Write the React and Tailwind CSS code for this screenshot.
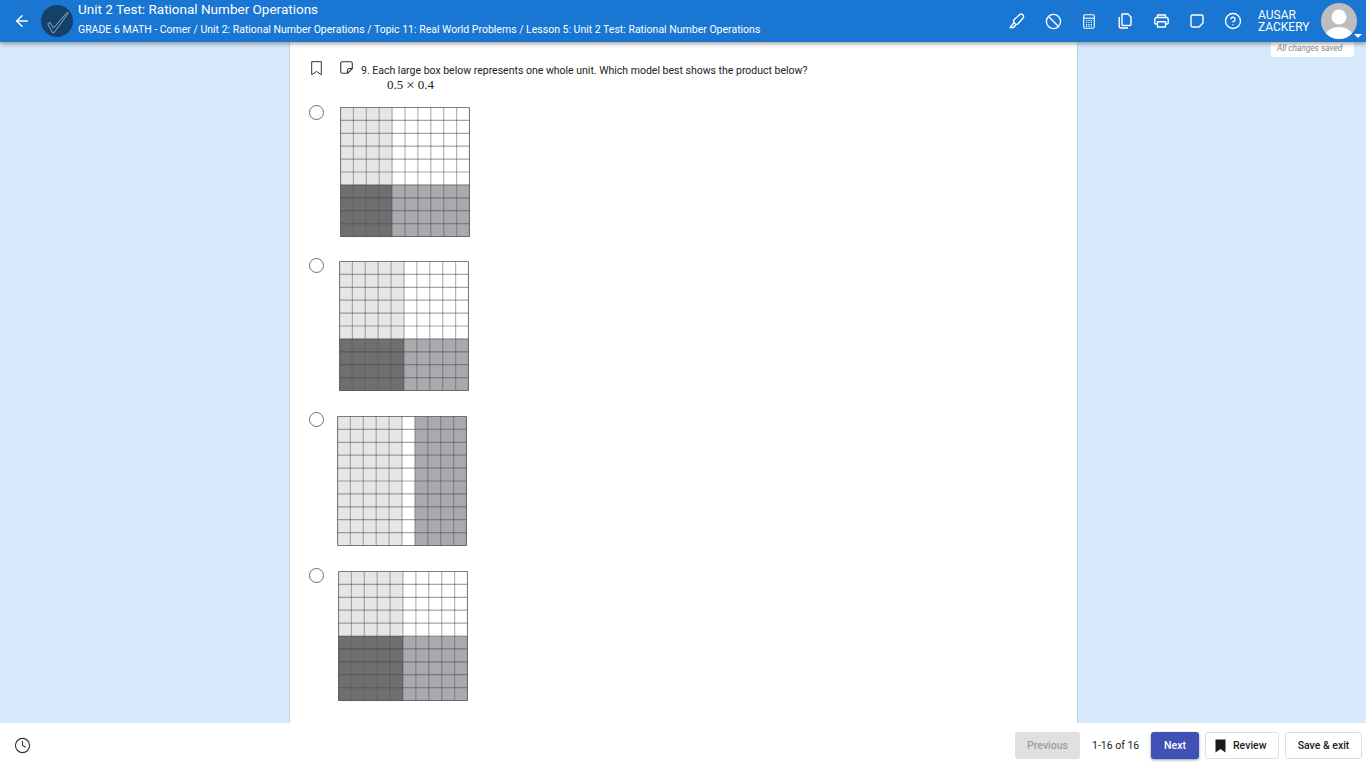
import React from "react";
import { ArrowLeft, Ban, CircleHelp, Clock } from "lucide-react";

const font = { fontFamily: "Roboto, sans-serif" };

function Model({ fill }) {
  const u = 12.9;
  const cells = [];
  for (let r = 0; r < 10; r++) {
    for (let c = 0; c < 10; c++) {
      const f = fill(r, c);
      if (f) cells.push(<rect key={r + "-" + c} x={c * u} y={r * u} width={u + 0.2} height={u + 0.2} fill={f} />);
    }
  }
  const lines = [];
  for (let i = 0; i <= 10; i++) {
    const edge = i === 0 || i === 10;
    lines.push(<line key={"v" + i} x1={i * u} x2={i * u} y1={0} y2={129} stroke="#3a3a3a" strokeOpacity={edge ? 0.65 : 0.38} strokeWidth="1.2" />);
    lines.push(<line key={"h" + i} y1={i * u} y2={i * u} x1={0} x2={129} stroke="#3a3a3a" strokeOpacity={edge ? 0.65 : 0.45} strokeWidth="1.2" />);
  }
  return (
    <svg width="130" height="130" viewBox="-0.5 -0.5 130 130" className="block">
      <rect x="0" y="0" width="129" height="129" fill="#fff" />
      {cells}
      {lines}
    </svg>
  );
}

const L = "#e6e6e6", D = "#6e6f71", M = "#a9aaad";

function Option({ fill, ml, mb, radioTop }) {
  return (
    <div className={"flex items-start " + mb}>
      <div className={"ml-[19.5px] h-[15px] w-[15px] shrink-0 rounded-full border border-[#6f6f6f] bg-white " + radioTop} />
      <div className={ml}><Model fill={fill} /></div>
    </div>
  );
}

export default function App() {
  return (
    <div className="relative flex h-screen w-full flex-col overflow-hidden bg-white" style={font}>
      <header className="relative z-10 flex h-[42px] shrink-0 items-center bg-[#1976d2] text-white shadow-[0_2px_4px_rgba(0,0,0,0.35)]">
        <ArrowLeft className="ml-[13px] h-[18px] w-[18px]" strokeWidth={2} />
        <svg width="32" height="32" viewBox="0 0 32 32" className="ml-[10px] shrink-0">
          <circle cx="16" cy="16" r="16" fill="#14406a" />
          <path d="M6.700 18.700 9 17.500l3.500 5.500L26 7.500l1.300.5L13 27.700h-1.500z" fill="none" stroke="#9db9d0" strokeWidth="0.9" strokeLinejoin="round" />
        </svg>
        <div className="ml-[5px] flex flex-col">
          <div className="mt-[-6px] text-[13.5px] leading-[19px]">Unit 2 Test: Rational Number Operations</div>
          <div className="mt-[4px] text-[10.5px] leading-[14px]">GRADE 6 MATH - Comer / Unit 2: Rational Number Operations / Topic 11: Real World Problems / Lesson 5: Unit 2 Test: Rational Number Operations</div>
        </div>
        <div className="ml-auto flex items-center">
          <div className="flex w-[36px] justify-center">
            <svg width="16" height="16" viewBox="0 0 16 16" fill="none" stroke="#fff" strokeWidth="1.4" strokeLinejoin="round" strokeLinecap="round">
              <path d="M4.800 7 10.800 1.500c1-.7 2.400-.4 3.200.6.700.9.700 2 0 2.900L8.800 11c-.8.700-2 .5-3-.4-1-1-1.500-2.600-1-3.600z" />
              <path d="M5 9.800 1 14.500h3.600l2.200-2.800" />
            </svg>
          </div>
          <div className="flex w-[36px] justify-center"><Ban className="h-[17px] w-[17px]" strokeWidth={1.9} /></div>
          <div className="flex w-[36px] justify-center">
            <svg width="12" height="15" viewBox="0 0 12 15" fill="none" stroke="#fff" strokeWidth="1.1">
              <rect x="0.700" y="0.700" width="10.600" height="13.600" rx="1.500" />
              <path d="M1 4.200h10" />
              <path d="M3 6.500h6M3 8.500h6M3 10.500h6M3 12.200h6" strokeDasharray="1.200 1.200" strokeWidth="1.200" />
            </svg>
          </div>
          <div className="flex w-[36px] justify-center">
            <svg width="14" height="16" viewBox="0 0 14 16" fill="none" stroke="#fff" strokeWidth="1.4" strokeLinejoin="round">
              <path d="M4 1h6l3 3v7.500a1 1 0 0 1-1 1H5a1 1 0 0 1-1-1z" />
              <path d="M1.200 4v9.500A1.500 1.500 0 0 0 2.700 15H10" />
            </svg>
          </div>
          <div className="flex w-[36px] justify-center">
            <svg width="15" height="14" viewBox="0 0 15 14" fill="none" stroke="#fff" strokeWidth="1.400" strokeLinejoin="round">
              <path d="M3.500 3.500V1h8v2.500" />
              <path d="M3.500 10H1.800A1 1 0 0 1 .8 9V5.500a2 2 0 0 1 2-2h9.400a2 2 0 0 1 2 2V9a1 1 0 0 1-1 1h-1.700" />
              <path d="M3.500 7.800h8V13h-8z" />
            </svg>
          </div>
          <div className="flex w-[36px] justify-center">
            <svg width="14" height="14" viewBox="0 0 14 14" fill="none" stroke="#fff" strokeWidth="1.400" strokeLinejoin="round">
              <path d="M2.500 1h9A1.500 1.500 0 0 1 13 2.500V9l-4 4H2.500A1.500 1.500 0 0 1 1 11.500v-9A1.500 1.500 0 0 1 2.500 1z" />
            </svg>
          </div>
          <div className="flex w-[36px] justify-center"><CircleHelp className="h-[18px] w-[18px]" strokeWidth={1.8} /></div>
        </div>
        <div className="ml-[7px] w-[63px] text-[12px] leading-[12px]">AUSAR<br />ZACKERY</div>
        <div className="relative mr-[9px] h-[36px] w-[36px] shrink-0">
          <svg width="36" height="36" viewBox="0 0 36 36" className="block">
            <defs><clipPath id="av"><circle cx="18" cy="18" r="18" /></clipPath></defs>
            <g clipPath="url(#av)">
              <rect width="36" height="36" fill="#bdbdbd" />
              <circle cx="18" cy="14" r="7.500" fill="#fff" />
              <ellipse cx="18" cy="34" rx="14" ry="10" fill="#fff" />
            </g>
          </svg>
          <div className="absolute bottom-[1px] right-[-5px] h-0 w-0 border-x-[4px] border-t-[4px] border-x-transparent border-t-white" />
        </div>
      </header>

      <main className="relative flex min-h-0 flex-1 justify-center bg-[#d7e9fa]">
        <div className="absolute right-[12px] top-0 h-[15px] w-[83px] rounded-b-[3px] bg-white pl-[6px] text-[8.4px] italic leading-[13px] text-[#888]">All changes saved</div>
        <div className="h-full w-[789px] overflow-hidden border-x border-[#c9d3de] bg-white pt-[19px]">
          <div className="flex items-start">
            <svg width="11" height="15" viewBox="0 0 11 15" fill="none" stroke="#333" strokeWidth="1" strokeLinejoin="round" className="ml-[21px]">
              <path d="M.7.700h9.600v13L5.500 10.500.7 13.700z" />
            </svg>
            <svg width="13" height="13" viewBox="0 0 13 13" fill="none" stroke="#333" strokeWidth="1.100" strokeLinejoin="round" className="ml-[18.5px]">
              <path d="M2.300.7h8.400a1.600 1.600 0 0 1 1.600 1.600V7.500l-4.800 4.800H2.300A1.600 1.600 0 0 1 .7 10.700V2.300A1.600 1.600 0 0 1 2.300.7z" />
              <path d="M7.500 12.300V9A1.500 1.500 0 0 1 9 7.500h3.300" />
            </svg>
            <div className="ml-[8px]">
              <div className="mt-[3px] text-[10.5px] leading-[14px] text-[#222]">9. Each large box below represents one whole unit. Which model best shows the product below?</div>
              <div className="ml-[26px] mt-[-1px] text-[13px] leading-[15px] text-[#222]" style={{ fontFamily: '"Liberation Serif", serif' }}>0.5<span className="mx-[3px] align-[-1px] text-[15px] leading-[15px]">×</span>0.4</div>
            </div>
          </div>
          <div className="mt-[14px]">
            <Option mb="mb-[24px]" radioTop="mt-[-2px]" ml="ml-[16px]" fill={(r, c) => (r < 6 ? (c < 4 ? L : null) : c < 4 ? D : M)} />
            <Option mb="mb-[25px]" radioTop="mt-[-3px]" ml="ml-[15px]" fill={(r, c) => (r < 6 ? (c < 5 ? L : null) : c < 5 ? D : M)} />
            <Option mb="mb-[25px]" radioTop="mt-[-4px]" ml="ml-[13px]" fill={(r, c) => (c < 5 ? L : c === 5 ? null : M)} />
            <Option mb="" radioTop="mt-[-3px]" ml="ml-[14px]" fill={(r, c) => (r < 5 ? (c < 5 ? L : null) : c < 5 ? D : M)} />
          </div>
        </div>
      </main>

      <footer className="relative z-10 flex h-[45px] shrink-0 items-center bg-white pr-[4px]">
        <Clock className="ml-[14px] h-[17px] w-[17px]" strokeWidth={1.6} color="#333" />
        <div className="ml-auto flex items-center text-[10.5px] font-medium">
          <button className="h-[27px] w-[65px] rounded-[3px] bg-[#e0e0e0] text-[#9e9e9e]">Previous</button>
          <span className="ml-[12px] w-[47px] whitespace-nowrap font-normal text-[#222]">1-16 of 16</span>
          <button className="ml-[12px] h-[27px] w-[48px] rounded-[3px] bg-[#3f51b5] text-white shadow-[0_1px_3px_rgba(0,0,0,0.4)]">Next</button>
          <button className="ml-[6px] flex h-[27px] w-[74px] items-center rounded-[3px] border border-[#dedede] bg-white pl-[9px] text-[#222]">
            <svg width="11" height="14" viewBox="0 0 11 14" className="mr-[7px]"><path d="M0.500 0.500h10V13.500L5.500 10 .5 13.500z" fill="#1a1a1a" /></svg>
            Review
          </button>
          <button className="ml-[6px] h-[27px] w-[77px] rounded-[3px] border border-[#dedede] bg-white text-[#222]">Save &amp; exit</button>
        </div>
      </footer>
    </div>
  );
}
